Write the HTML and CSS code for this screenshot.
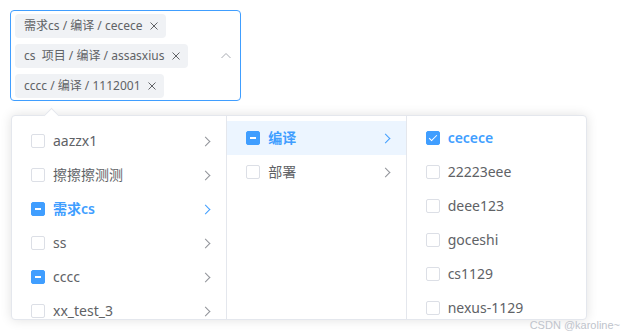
FILE: index.html
```html
<!DOCTYPE html>
<html lang="zh">

<head>
    <meta charset="UTF-8">
    <title>Cascader</title>
    <link rel="stylesheet" href="styles.css">
</head>

<body>
    <div class="cascader">
        <div class="tags">
            <span class="tag">需求cs / 编译 / cecece <svg class="close" width="8" height="8" viewBox="0 0 8 8"><path d="M0.5 0.5 L7.5 7.5 M7.5 0.5 L0.5 7.5" stroke="#606266" stroke-width="1"/></svg></span>
            <span class="tag">cs&nbsp; 项目 / 编译 / assasxius <svg class="close" width="8" height="8" viewBox="0 0 8 8"><path d="M0.5 0.5 L7.5 7.5 M7.5 0.5 L0.5 7.5" stroke="#606266" stroke-width="1"/></svg></span>
            <span class="tag">cccc / 编译 / 1112001 <svg class="close" width="8" height="8" viewBox="0 0 8 8"><path d="M0.5 0.5 L7.5 7.5 M7.5 0.5 L0.5 7.5" stroke="#606266" stroke-width="1"/></svg></span>
        </div>
        <svg class="caret" width="12" height="12" viewBox="0 0 12 12">
            <path d="M1.5 8 L6 3.5 L10.5 8" fill="none" stroke="#a8abb2" stroke-width="1"/>
        </svg>
    </div>

    <div class="panel">
        <span class="arrow"></span>
        <ul class="menu first">
            <li><span class="box"></span><span class="label">aazzx1</span><span class="next"></span></li>
            <li><span class="box"></span><span class="label">擦擦擦测测</span><span class="next"></span></li>
            <li class="active"><span class="box half"></span><span class="label">需求cs</span><span class="next"></span></li>
            <li><span class="box"></span><span class="label">ss</span><span class="next"></span></li>
            <li><span class="box half"></span><span class="label">cccc</span><span class="next"></span></li>
            <li><span class="box"></span><span class="label">xx_test_3</span><span class="next"></span></li>
        </ul>
        <ul class="menu">
            <li class="active hover"><span class="box half"></span><span class="label">编译</span><span class="next"></span></li>
            <li><span class="box"></span><span class="label">部署</span><span class="next"></span></li>
        </ul>
        <ul class="menu">
            <li class="active"><span class="box checked"></span><span class="label">cecece</span></li>
            <li><span class="box"></span><span class="label">22223eee</span></li>
            <li><span class="box"></span><span class="label">deee123</span></li>
            <li><span class="box"></span><span class="label">goceshi</span></li>
            <li><span class="box"></span><span class="label">cs1129</span></li>
            <li><span class="box"></span><span class="label">nexus-1129</span></li>
        </ul>
    </div>

    <div class="mark">CSDN @karoline~</div>
</body>

</html>
```

FILE: styles.css
```css
body {
    margin: 0;
    padding: 10px 0 0 10px;
    font-family: "Noto Sans", "Noto Sans CJK SC", sans-serif;
    background: #fff;
    position: relative;
    height: 325px;
    overflow: hidden;
}

.cascader {
    width: 231px;
    height: 91px;
    box-sizing: border-box;
    border: 1px solid #409eff;
    border-radius: 4px;
    display: flex;
    align-items: center;
}

.tags {
    flex: 1;
    display: flex;
    flex-direction: column;
    align-items: flex-start;
    gap: 6px;
    padding-left: 4px;
}

.tag {
    height: 24px;
    line-height: 24px;
    padding: 0 8px 0 9px;
    background: #f0f2f5;
    color: #606266;
    font-size: 12px;
    border-radius: 4px;
    white-space: nowrap;
}

.close {
    margin-left: 4px;
    vertical-align: -0.5px;
}

.caret {
    margin-right: 8px;
}

.panel {
    position: relative;
    margin: 14px 0 0 1px;
    width: 576px;
    height: 205px;
    box-sizing: border-box;
    border: 1px solid #e4e7ed;
    border-radius: 4px;
    box-shadow: 0 0 12px rgba(0, 0, 0, 0.12);
    display: flex;
    background: #fff;
}

.arrow {
    position: absolute;
    top: -6px;
    left: 34px;
    width: 10px;
    height: 10px;
    background: #fff;
    border-left: 1px solid #e4e7ed;
    border-top: 1px solid #e4e7ed;
    transform: rotate(45deg);
}

.menu {
    list-style: none;
    margin: 0;
    padding: 5px 0 0;
    width: 180px;
    height: 100%;
    box-sizing: border-box;
    border-right: 1px solid #e4e7ed;
    overflow: hidden;
}

.menu.first {
    width: 216px;
    padding-top: 8px;
}

.menu:last-child {
    border-right: none;
}

.menu li {
    height: 34px;
    display: flex;
    align-items: center;
    padding: 0 14px 0 19px;
    font-size: 14px;
    color: #606266;
}

.menu li.hover {
    background: #ecf5ff;
}

.menu li.active {
    color: #409eff;
    font-weight: 600;
}

.label {
    flex: 1;
    margin-left: 8px;
    line-height: 14px;
}

.box {
    width: 14px;
    height: 14px;
    box-sizing: border-box;
    border: 1px solid #dcdfe6;
    border-radius: 2px;
    position: relative;
    background: #fff;
}

.box.half,
.box.checked {
    background: #409eff;
    border-color: #409eff;
}

.box.half::after {
    content: "";
    position: absolute;
    left: 3px;
    top: 5px;
    width: 6px;
    height: 2px;
    background: #fff;
}

.box.checked::after {
    content: "";
    position: absolute;
    left: 4px;
    top: 1px;
    width: 3px;
    height: 7px;
    border: 1px solid #fff;
    border-left: 0;
    border-top: 0;
    transform: rotate(45deg);
}

.next {
    width: 6px;
    height: 6px;
    border-right: 1px solid #909399;
    border-top: 1px solid #909399;
    transform: rotate(45deg);
    margin-right: 3px;
}

.active .next {
    border-color: #409eff;
}

.mark {
    position: absolute;
    right: 8px;
    bottom: 4px;
    font-size: 11px;
    color: #c0c4cc;
    font-family: "Liberation Sans", sans-serif;
}
```
